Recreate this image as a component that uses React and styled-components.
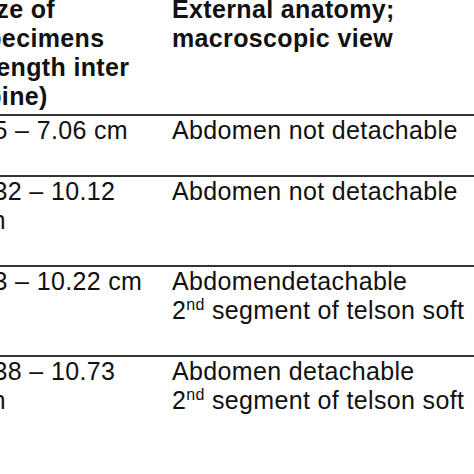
import React from "react";
import styled, { createGlobalStyle } from "styled-components";

const Global = createGlobalStyle`
  html, body { margin: 0; padding: 0; background: #fff; overflow: hidden; }
  body { font-family: "Liberation Sans", Arial, sans-serif; color: #111; }
`;

const Table = styled.div`
  display: grid;
  grid-template-columns: 200px 330px;
  margin: -5px 0 0 -28px;
  font-size: 25px;
  line-height: 29px;
  letter-spacing: 0.35px;
  width: 530px;
`;

const Cell = styled.div`
  padding: ${(p) => (p.$head ? "0 0 3px 0" : "0 0 30px 0")};
  padding-right: ${(p) => (p.$left ? "22px" : "0")};
  font-weight: ${(p) => (p.$head ? 700 : 400)};
  border-top: ${(p) => (p.$head ? "none" : "2px solid #333")};
`;

const Sup = styled.sup`
  font-size: 16px;
  line-height: 0;
  vertical-align: 9px;
  letter-spacing: 0.3px;
`;

const rows = [
  { size: "6.5 – 7.06 cm", anatomy: ["Abdomen not detachable"] },
  { size: "7.32 – 10.12 cm", anatomy: ["Abdomen not detachable"] },
  { size: "8.3 – 10.22 cm", anatomy: ["Abdomendetachable", true] },
  { size: "8.38 – 10.73 cm", anatomy: ["Abdomen detachable", true] },
];

export default function App() {
  return (
    <>
      <Global />
      <Table>
        <Cell $head $left>Size of specimens (Length inter spine)</Cell>
        <Cell $head>External anatomy; macroscopic view</Cell>
        {rows.map((r, i) => (
          <React.Fragment key={i}>
            <Cell $left>{r.size}</Cell>
            <Cell>
              {r.anatomy[0]}
              {r.anatomy[1] && (
                <>
                  <br />2<Sup>nd</Sup> segment of telson soft
                </>
              )}
            </Cell>
          </React.Fragment>
        ))}
      </Table>
    </>
  );
}
